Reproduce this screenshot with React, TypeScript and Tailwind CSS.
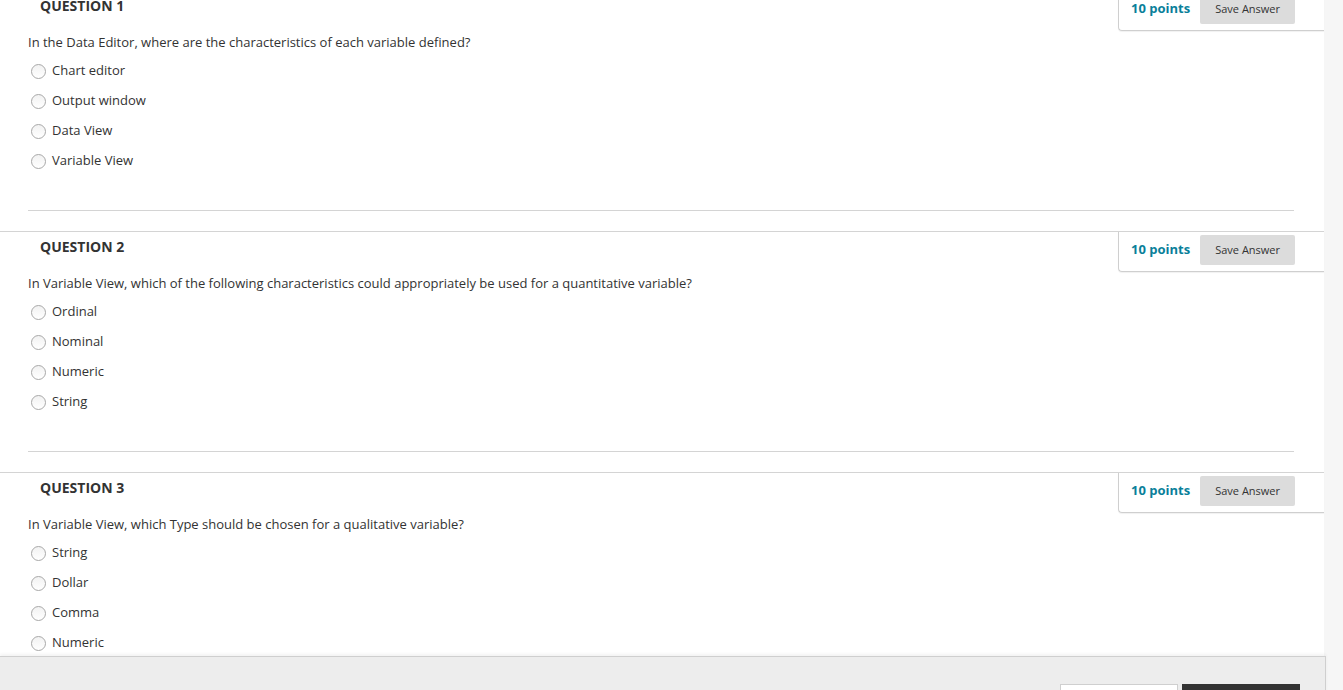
import React from "react";

interface Question {
  number: number;
  text: string;
  options: string[];
}

const questions: Question[] = [
  {
    number: 1,
    text: "In the Data Editor, where are the characteristics of each variable defined?",
    options: ["Chart editor", "Output window", "Data View", "Variable View"],
  },
  {
    number: 2,
    text: "In Variable View, which of the following characteristics could appropriately be used for a quantitative variable?",
    options: ["Ordinal", "Nominal", "Numeric", "String"],
  },
  {
    number: 3,
    text: "In Variable View, which Type should be chosen for a qualitative variable?",
    options: ["String", "Dollar", "Comma", "Numeric"],
  },
];

function QuestionBlock({ q }: { q: Question }) {
  return (
    <div className="border-t border-[#d4d4d4]">
      {/* header */}
      <div className="flex justify-between h-[40px]">
        <h3 className="pl-[40px] pt-[6px] text-[14px] leading-[18px] font-bold text-[#333]">
          QUESTION {q.number}
        </h3>
        <div className="w-[206px] flex items-start gap-[10px] pl-[12px] pt-[3px] border-l border-b border-[#cfcfcf] rounded-bl-[4px] shadow-[0_1px_1px_rgba(0,0,0,0.06)]">
          <span className="pt-[5px] text-[13px] leading-[18px] font-bold text-[#0a7f9a]">
            10 points
          </span>
          <button className="w-[95px] h-[30px] bg-[#dcdcdc] rounded-[2px] text-[11px] text-[#333]">
            Save Answer
          </button>
        </div>
      </div>
      <p className="pl-[28px] pt-[2px] text-[13px] leading-[18px] text-[#333]">{q.text}</p>
      <ul className="pt-[5px] pl-[31px]">
        {q.options.map((o) => (
          <li key={o} className="flex items-center h-[30px] gap-[6px]">
            <span className="w-[15px] h-[15px] rounded-full border border-[#a8a8a8] bg-gradient-to-b from-[#f2f2f2] to-white" />
            <span className="text-[13px] text-[#333]">{o}</span>
          </li>
        ))}
      </ul>
      <div className="h-[34px]" />
      <div className="ml-[28px] w-[1266px] border-t border-[#d4d4d4] mb-[20px]" />
    </div>
  );
}

export default function App() {
  return (
    <div
      className="h-[690px] overflow-hidden flex bg-[#f6f6f6]"
      style={{ fontFamily: '"Open Sans", "Liberation Sans", sans-serif' }}
    >
      <div className="w-[1324px] bg-white relative">
        <div className="-mt-[10px]">
          {questions.map((q) => (
            <QuestionBlock key={q.number} q={q} />
          ))}
        </div>
        <div className="absolute left-0 top-[656px] w-[1326px] h-[60px] bg-[#ededed] border-t border-r border-[#cfcfcf] shadow-[0_-2px_3px_rgba(0,0,0,0.05)] flex justify-between items-start pt-[27px] pl-[14px] pr-[25px]">
          <p className="text-[12px] leading-[16px] text-[#333] pt-[5px]">
            Click Save and Submit to save and submit. Click Save All Answers to save all answers.
          </p>
          <div className="flex gap-[4px]">
            <button className="w-[118px] h-[30px] bg-white border border-[#cfcfcf] text-[12px] text-[#333]">
              Save All Answers
            </button>
            <button className="w-[118px] h-[30px] bg-[#333] text-[12px] text-white">
              Save and Submit
            </button>
          </div>
        </div>
      </div>
    </div>
  );
}
